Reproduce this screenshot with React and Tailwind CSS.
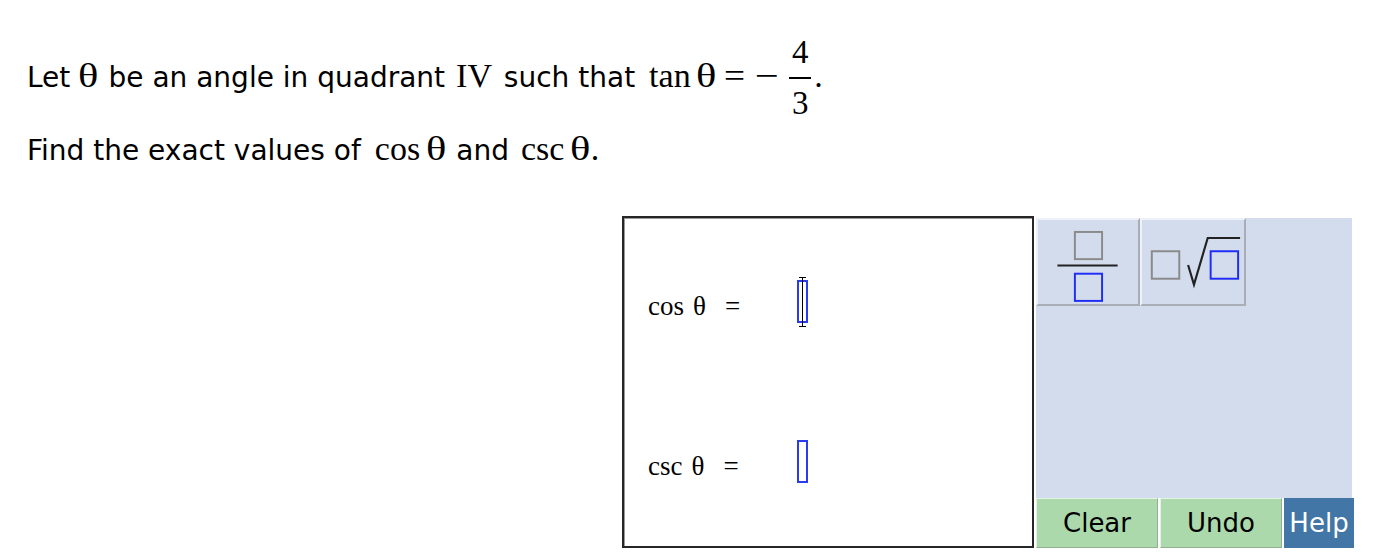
import React from 'react';

const serif = "font-['Liberation_Serif','Times_New_Roman',serif]";

const M = ({ children, className = '' }) => (
  <span className={`${serif} text-[34px] leading-none mb-[5px] ${className}`}>{children}</span>
);

const AnswerSlot = ({ active }) => (
  <span className="relative inline-block w-[11px] h-[43px] border-2 border-[#2b3cf0]">
    {active && (
      <span className="absolute left-[2px] top-[-5px] w-[3px] h-[50px]">
        <span className="absolute left-[1px] top-0 w-[1px] h-full bg-black" />
        <span className="absolute left-[-2px] top-0 w-[7px] h-[1px] bg-black" />
        <span className="absolute left-[-2px] bottom-0 w-[7px] h-[1px] bg-black" />
      </span>
    )}
  </span>
);

const FractionIcon = () => (
  <svg width="103" height="88" viewBox="0 0 103 88">
    <rect x="38" y="11" width="28" height="28" fill="none" stroke="#8a8a8a" strokeWidth="2" />
    <line x1="20" y1="45.5" x2="82" y2="45.5" stroke="#222" strokeWidth="2" />
    <rect x="38" y="54" width="28" height="28" fill="none" stroke="#1f2cf5" strokeWidth="2" />
  </svg>
);

const RootIcon = () => (
  <svg width="104" height="88" viewBox="0 0 104 88">
    <rect x="10" y="31" width="28" height="28" fill="none" stroke="#8a8a8a" strokeWidth="2" />
    <path d="M47 45 L53 65 L67 17.5 L100 17.5" fill="none" stroke="#222" strokeWidth="2.2" strokeLinejoin="miter" />
    <rect x="70" y="31" width="28" height="28" fill="none" stroke="#1f2cf5" strokeWidth="2" />
  </svg>
);

const PaletteButton = ({ children, width }) => (
  <button className={`${width} h-[88px] flex items-start justify-start bg-[#d3dcec] border-t-2 border-l-2 border-t-[#eef1f8] border-l-[#eef1f8] border-r-2 border-b-2 border-r-[#a9adb5] border-b-[#a9adb5]`}>
    {children}
  </button>
);

const ActionButton = ({ label, className }) => (
  <button className={`h-[50px] flex items-center justify-center text-[26px] leading-none ${className}`}>
    {label}
  </button>
);

const AnswerRow = ({ fn, active }) => (
  <div className="flex items-center h-[80px]">
    <span className={`${serif} text-[27px] leading-none mt-[10px] w-[149px] flex`}>
      <span>{fn}</span>
      <span className="ml-[9px]">θ</span>
      <span className="ml-[19px]">=</span>
    </span>
    <AnswerSlot active={active} />
  </div>
);

export default function App() {
  return (
    <div className="w-[1386px] h-[556px] bg-white text-black font-['DejaVu_Sans','Verdana',sans-serif] pl-[27px] pt-[33px] overflow-hidden">
      {/* question text */}
      <div className="flex items-center h-[90px] text-[28px] leading-none whitespace-pre">
        <span>Let</span>
        <M className="ml-[10px] scale-x-125">θ</M>
        <span className="ml-[3px]"> be an angle in quadrant</span>
        <M className="ml-[11px]">IV</M>
        <span className="ml-[3px]"> such that</span>
        <M className="ml-[14px]">tan</M>
        <M className="ml-[7px] scale-x-125">θ</M>
        <M className="ml-[11px] scale-x-110">=</M>
        <M className="ml-[13px] scale-x-125">−</M>
        <span className="inline-flex flex-col items-center ml-[13px]">
          <span className={`${serif} text-[33px] leading-none mb-[8px]`}>4</span>
          <span className="w-[22px] h-[2px] bg-black" />
          <span className={`${serif} text-[33px] leading-none mt-[8px]`}>3</span>
        </span>
        <M className="ml-[3px]">.</M>
      </div>

      <div className="flex items-center h-[40px] mt-[8px] text-[28px] leading-none whitespace-pre">
        <span>Find the exact values of</span>
        <M className="ml-[14px]">cos</M>
        <M className="ml-[8px] scale-x-125">θ</M>
        <span className="ml-[3px]"> and</span>
        <M className="ml-[12px]">csc</M>
        <M className="ml-[8px] scale-x-125">θ</M>
        <M className="ml-[2px]">.</M>
      </div>

      {/* answer widget */}
      <div className="flex items-start ml-[595px] mt-[45px]">
        <div className="w-[412px] h-[332px] border-2 border-[#262626] shadow-[inset_1px_1px_0_#9a9a9a] pl-[24px] pt-[43px] flex flex-col gap-[80px]">
          <AnswerRow fn="cos" active />
          <AnswerRow fn="csc" />
        </div>

        <div className="ml-[2px] mt-[2px] w-[318px] flex flex-col">
          <div className="w-[316px] h-[280px] bg-[#d3dcec] flex items-start">
            <PaletteButton width="w-[104px]">
              <FractionIcon />
            </PaletteButton>
            <PaletteButton width="w-[106px]">
              <RootIcon />
            </PaletteButton>
          </div>
          <div className="flex h-[50px] gap-[2px]">
            <ActionButton label="Clear" className="w-[122px] bg-[#acd9ac] border-t border-l border-[#e4f2e4] border-r border-b border-r-[#8fb18f] border-b-[#8fb18f]" />
            <ActionButton label="Undo" className="w-[122px] bg-[#acd9ac] border-t border-l border-[#e4f2e4] border-r border-b border-r-[#8fb18f] border-b-[#8fb18f]" />
            <ActionButton label="Help" className="w-[70px] bg-[#4176a6] text-white" />
          </div>
        </div>
      </div>
    </div>
  );
}
